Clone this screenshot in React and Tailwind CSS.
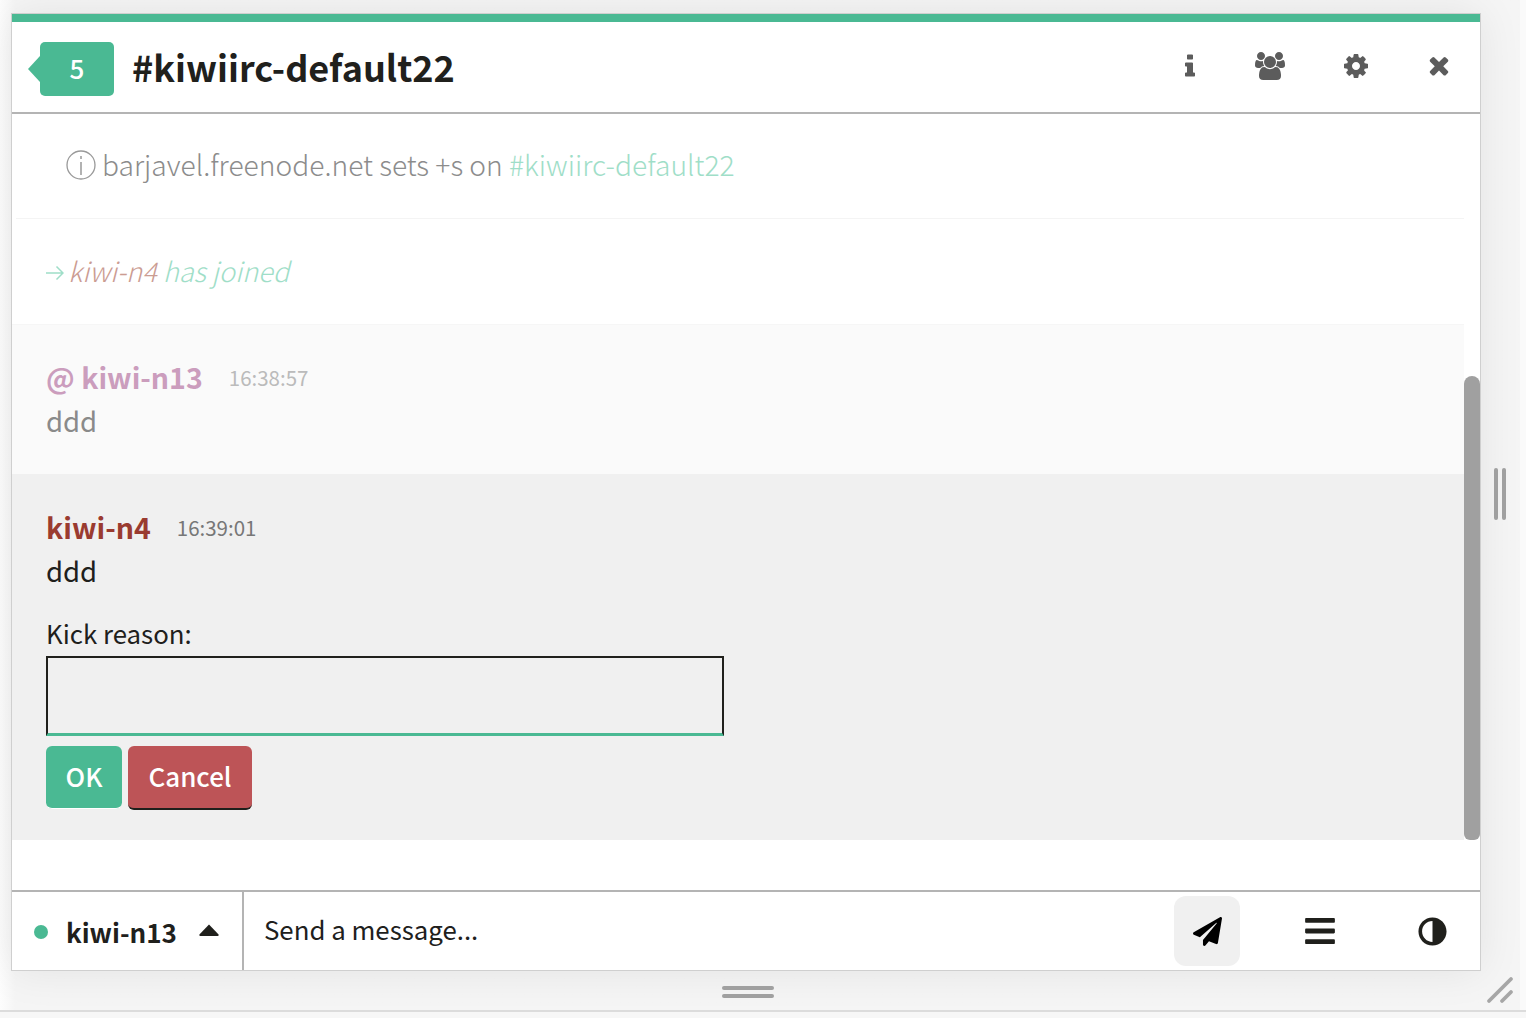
import { FaPaperPlane, FaBars, FaAdjust } from "react-icons/fa";

const font = "font-['Noto_Sans_CJK_JP','Noto_Sans',sans-serif]";

// font awesome 4 shapes, react-icons only ships the newer ones
const INFO = "M704 1376v128q0 26-19 45t-45 19h-512q-26 0-45-19t-19-45v-128q0-26 19-45t45-19h64v-384h-64q-26 0-45-19t-19-45v-128q0-26 19-45t45-19h384q26 0 45 19t19 45v576h64q26 0 45 19t19 45zm-128-1152v192q0 26-19 45t-45 19h-256q-26 0-45-19t-19-45v-192q0-26 19-45t45-19h256q26 0 45 19t19 45z";
const USERS = "M593 896q-162 5-265 128h-134q-82 0-138-40.5t-56-118.5q0-353 124-353 6 0 43.5 21t97.5 42.5 119 21.5q67 0 133-23-5 37-5 66 0 139 81 256zm1071 637q0 120-73 189.5t-194 69.5h-874q-121 0-194-69.5t-73-189.5q0-53 3.5-103.5t14-109 26.5-108.5 43-97.5 62-81 85.5-53.5 111.5-20q10 0 43 21.5t73 48 107 48 135 21.5 135-21.5 107-48 73-48 43-21.5q61 0 111.5 20t85.5 53.5 62 81 43 97.5 26.5 108.5 14 109 3.5 103.5zm-1024-1277q0 106-75 181t-181 75-181-75-75-181 75-181 181-75 181 75 75 181zm704 384q0 159-112.5 271.5t-271.5 112.5-271.5-112.5-112.5-271.5 112.5-271.5 271.5-112.5 271.5 112.5 112.5 271.5zm576 225q0 78-56 118.5t-138 40.5h-134q-103-123-265-128 81-117 81-256 0-29-5-66 66 23 133 23 59 0 119-21.5t97.5-42.5 43.5-21q124 0 124 353zm-128-609q0 106-75 181t-181 75-181-75-75-181 75-181 181-75 181 75 75 181z";
const COG = "M1152 896q0-106-75-181t-181-75-181 75-75 181 75 181 181 75 181-75 75-181zm512-109v222q0 12-8 23t-20 13l-185 28q-19 54-39 91 35 50 107 138 10 12 10 25t-9 23q-27 37-99 108t-94 71q-12 0-26-9l-138-108q-44 23-91 38-16 136-29 186-7 28-36 28h-222q-14 0-24.5-8.5t-11.5-21.5l-28-184q-49-16-90-37l-141 107q-10 9-25 9-14 0-25-11-126-114-165-168-7-10-7-23 0-12 8-23 15-21 51-66.5t54-70.5q-27-50-41-99l-183-27q-13-2-21-12.5t-8-23.5v-222q0-12 8-23t19-13l186-28q14-46 39-92-40-57-107-138-10-12-10-24 0-10 9-23 26-36 98.5-107.5t94.5-71.5q13 0 26 10l138 107q44-23 91-38 16-136 29-186 7-28 36-28h222q14 0 24.5 8.5t11.5 21.5l28 184q49 16 90 37l142-107q9-9 24-9 13 0 25 10 129 119 165 170 7 8 7 22 0 12-8 23-15 21-51 66.5t-54 70.5q26 50 41 98l183 28q13 2 21 12.5t8 23.5z";
const TIMES = "M1298 1214q0 40-28 68l-136 136q-28 28-68 28t-68-28l-294-294-294 294q-28 28-68 28t-68-28l-136-136q-28-28-28-68t28-68l294-294-294-294q-28-28-28-68t28-68l136-136q28-28 68-28t68 28l294 294 294-294q28-28 68-28t68 28l136 136q28 28 28 68t-28 68l-294 294 294 294q28 28 28 68z";

export default function App() {
  return (
    <div className={`${font} w-[1526px] h-[1018px] overflow-hidden bg-[#fafafa] flex flex-col text-[#20201c]`}>
      <div className="h-[1010px] w-[1520px] shrink-0 overflow-hidden relative flex bg-gradient-to-r from-[#fdfdfd] via-[#f5f5f5] via-[1%] to-[#f5f5f5] pt-[13px] pl-[11px]">
        <div className="w-[1470px] h-[958px] shrink-0 flex flex-col bg-white border border-[#cfcfcf] shadow-[0_0_40px_rgba(0,0,0,0.08)] relative">
          <div className="h-[8px] bg-[#4ab993] shrink-0" />

          <header className="h-[92px] shrink-0 flex items-center border-b-2 border-[#b4b4b4] pl-[28px]">
            <div className="relative w-[74px] h-[54px] mt-[4px] bg-[#4ab993] rounded-[5px] flex items-center justify-center text-white text-[26px] font-medium pb-[3px]">
              <span className="absolute left-[-12px] top-[14px] w-0 h-0 border-y-[13px] border-y-transparent border-r-[12px] border-r-[#4ab993]" />
              5
            </div>
            <h1 className="ml-[18px] text-[36px] font-bold leading-none mt-[-2px] flex-1">#kiwiirc-default22</h1>
            <div className="flex items-center h-full mt-[-2px] text-[#5c5c5c]">
              <div className="w-[72px] flex justify-center">
                <svg className="w-[12px] h-[28px]" viewBox="0 0 768 1792" fill="currentColor"><path d={INFO} /></svg>
              </div>
              <div className="w-[88px] flex justify-center">
                <svg className="w-[30px] h-[28px]" viewBox="0 0 1920 1792" fill="currentColor"><path d={USERS} /></svg>
              </div>
              <div className="w-[84px] flex justify-center">
                <svg className="w-[28px] h-[28px]" viewBox="0 0 1792 1792" fill="currentColor"><path d={COG} /></svg>
              </div>
              <div className="w-[82px] flex justify-center">
                <svg className="w-[22px] h-[28px] mt-[2px]" viewBox="0 0 1408 1792" fill="currentColor"><path d={TIMES} /></svg>
              </div>
            </div>
          </header>

          <main className="flex-1 flex flex-col relative">
            <div className="w-[1452px] flex flex-col">
              <div className="h-[105px] ml-[4px] border-b border-[#f4f4f4] flex items-center pl-[50px] pb-[3px] text-[28.2px] font-light text-[#8c8c8c]">
                <svg className="w-[30px] h-[30px] mr-[6px]" viewBox="0 0 30 30" fill="none" stroke="#999" strokeWidth="1.3">
                  <circle cx="15" cy="15" r="14" />
                  <path d="M15 12V25M15 6V9" strokeWidth="1.5" />
                </svg>
                <span>barjavel.freenode.net sets +s on&nbsp;</span>
                <span className="text-[#9fdec8]">#kiwiirc-default22</span>
              </div>
              <div className="h-[106px] border-b border-[#f6f6f6] flex items-center pl-[34px] pb-[2px] text-[27.2px] font-light italic text-[#9fdec8]">
                <svg className="w-[18px] h-[16px] mr-[4px] mt-[4px]" viewBox="0 0 18 16" fill="none" stroke="#9fdec8" strokeWidth="1.5">
                  <path d="M0 8H17M10.5 1.5L17 8L10.5 14.5" />
                </svg>
                <span className="text-[#cb9c92]">kiwi-n4&nbsp;</span>
                <span>has joined</span>
              </div>
              <div className="h-[149px] bg-[#fafafa] pl-[34px] pt-[31px]">
                <div className="flex items-baseline h-[40px]">
                  <span className="text-[28.5px] font-bold text-[#cb9dbd]">@ kiwi-n13</span>
                  <span className="ml-[26px] text-[20.5px] text-[#bbbbbb] -translate-y-[3px]">16:38:57</span>
                </div>
                <div className="text-[27.5px] leading-[40px] mt-[4px] text-[#8a8a8a]">ddd</div>
              </div>
              <div className="h-[366px] bg-[#f0f0f0] pl-[34px] pt-[32px]">
                <div className="flex items-baseline h-[40px]">
                  <span className="text-[28.5px] font-bold text-[#9a3b30]">kiwi-n4</span>
                  <span className="ml-[26px] text-[20.5px] text-[#777777] -translate-y-[3px]">16:39:01</span>
                </div>
                <div className="text-[27.5px] leading-[40px] mt-[4px]">ddd</div>
                <div className="text-[25.8px] leading-[38px] mt-[24px]">Kick reason:</div>
                <input className="block w-[678px] h-[80px] mt-[4px] border-2 border-[#20201c] border-b-[3px] border-b-[#4ab993] bg-transparent outline-none" />
                <div className="flex gap-[6px] mt-[10px] items-start">
                  <button className="w-[76px] h-[63px] pb-[4px] bg-[#4ab993] border-b border-b-white rounded-[6px] text-white text-[26px] font-medium">OK</button>
                  <button className="w-[124px] h-[64px] pb-[3px] bg-[#bd5457] border-b-2 border-b-[#20201c] rounded-[6px] text-white text-[26px] font-medium">Cancel</button>
                </div>
              </div>
            </div>
            {/* scroll thumb */}
            <div className="absolute right-0 top-[262px] w-[16px] h-[464px] bg-[#a0a0a0] rounded-t-[8px] rounded-b-[6px]" />
          </main>

          <footer className="h-[80px] shrink-0 border-t-2 border-[#b4b4b4] flex items-stretch">
            <div className="w-[232px] shrink-0 border-r-2 border-[#b4b4b4] flex items-center pl-[22px]">
              <span className="w-[14px] h-[14px] mt-[2px] rounded-full bg-[#4ab993]" />
              <span className="ml-[18px] text-[26px] font-bold">kiwi-n13</span>
              <svg className="ml-[22px] w-[20px] h-[12px] mt-[-3px]" viewBox="0 0 20 12" fill="#20201c">
                <path d="M10 .5L19.6 10.4Q20 12 18.6 12H1.4Q0 12 .4 10.4Z" />
              </svg>
            </div>
            <div className="flex-1 flex items-center pl-[20px] text-[25.8px] pb-[4px]">Send a message...</div>
            <div className="flex items-center">
              <div className="w-[66px] h-[70px] bg-[#f0f0f0] rounded-[12px] flex items-center justify-center text-black">
                <FaPaperPlane className="w-[29px] h-[29px]" />
              </div>
              <div className="w-[159px] flex items-center justify-center">
                <FaBars className="w-[32px] h-[34px]" />
              </div>
              <div className="w-[66px] mr-[15px] flex items-center justify-center">
                <FaAdjust className="w-[29px] h-[29px] -scale-x-100" />
              </div>
            </div>
          </footer>
        </div>

        {/* right hand grip */}
        <div className="flex-1 flex items-center pl-[13px] pb-[36px] gap-[4px] relative">
          <span className="w-[4px] h-[52px] rounded-full bg-[#a0a0a0]" />
          <span className="w-[4px] h-[52px] rounded-full bg-[#a0a0a0]" />
        </div>

        {/* bottom grip */}
        <div className="absolute left-[722px] top-[986px] w-[52px] h-[12px] flex flex-col justify-between">
          <span className="h-[4px] rounded-full bg-[#a0a0a0]" />
          <span className="h-[4px] rounded-full bg-[#a0a0a0]" />
        </div>

        {/* resize corner */}
        <svg className="absolute left-[1486px] top-[976px] w-[28px] h-[28px]" viewBox="0 0 28 28" fill="none" stroke="#a6a6a6" strokeWidth="3.8" strokeLinecap="round">
          <path d="M3 25L25 3M16 25L25 16" />
        </svg>
      </div>

      <div className="h-[2px] w-[1526px] bg-[#dcdcdc] shrink-0" />
      <div className="flex-1 bg-[#f7f7f7]" />
    </div>
  );
}
